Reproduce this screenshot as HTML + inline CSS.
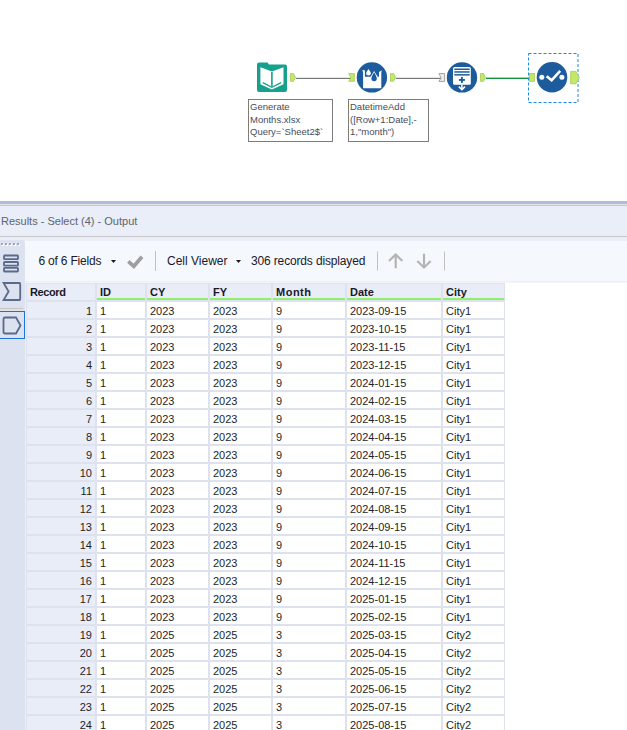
<!DOCTYPE html>
<html><head><meta charset="utf-8">
<style>
*{margin:0;padding:0;box-sizing:border-box}
html,body{width:627px;height:730px;overflow:hidden;background:#fff;position:relative;font-family:"Liberation Sans",sans-serif}
.a{position:absolute}
.hc{position:absolute;top:284px;height:16px;background:#e9edf8;font-weight:bold;font-size:11px;color:#1a1a2a;line-height:14px;padding-top:1px;padding-left:3px;white-space:nowrap}
.gr{position:absolute;top:298px;height:2px;background:#8ef06c}
.rc,.dc{position:absolute;height:16px;font-size:11px;line-height:18px;color:#1e1e28;white-space:nowrap}
.rc{background:#e9edf8;text-align:right;padding-right:3px}
.dc{background:#fff;padding-left:3px}
.tb{position:absolute;font-size:12px;color:#1a1a2a;white-space:nowrap;line-height:14px}
.ann{position:absolute;border:1px solid #7c7c7c;background:#fff;font-size:9.5px;line-height:12.3px;color:#464d5c;padding:1.4px 0 0 1px;white-space:nowrap}
</style></head><body>
<!-- canvas -->
<svg class="a" style="left:0;top:0" width="627" height="200" viewBox="0 0 627 200">
  <!-- connections -->
  <rect x="296" y="77" width="55" height="1" fill="#e4e4e4"/><rect x="296" y="78" width="55" height="1" fill="#7a7a7a"/>
  <rect x="396" y="77" width="45" height="1" fill="#e4e4e4"/><rect x="396" y="78" width="45" height="1" fill="#7a7a7a"/>
  <rect x="486" y="77" width="45" height="1" fill="#a6d4ae"/><rect x="486" y="78" width="45" height="1" fill="#14923e"/>
  <!-- node1 input folder -->
  <path d="M257 64.5 Q257 62.4 259 62.4 L267.5 62.4 L269 64.4 L285 64.4 Q287 64.4 287 66.4 L287 90 Q287 92 285 92 L259 92 Q257 92 257 90 Z" fill="#17a08e"/>
  <path d="M260.4 67.2 L271.9 71.6 L283.5 67.2 L283.5 84.3 L271.9 89.5 L260.4 84.3 Z" fill="#fff"/>
  <line x1="271.9" y1="72" x2="271.9" y2="86.5" stroke="#17a08e" stroke-width="1.6"/>
  <polyline points="262.8,82.7 271.9,87.3 281.1,82.7" fill="none" stroke="#17a08e" stroke-width="1.4"/>
  <path d="M290.4 73.6 L293.5 73.6 L295.5 77.5 L293.5 81.3 L290.4 81.3 Z" fill="#c2e86a" stroke="#a9cf5c" stroke-width="0.9" stroke-linejoin="round"/>
  <!-- node2 formula -->
  <path d="M348.7 73.6 L354.3 73.6 L354.3 81.3 L348.7 81.3 L350.9 78 Z" fill="#c2e86a" stroke="#a9cf5c" stroke-width="0.9" stroke-linejoin="round"/>
  <circle cx="371.9" cy="77.4" r="15.2" fill="#1d5c9c"/>
  <path d="M362.1 70.2 L364.9 70.2 L364.9 76.8 L370.6 76.8 L374.1 70.9 L377.7 76.8 L379 76.8 L379 71.9 L381.8 70.2 L381.3 71.9 L381.3 88.3 L363.1 88.3 L363.1 71.9 Z" fill="#fff"/>
  <path d="M374.1 72.2 Q376.8 76.5 376.8 78.6 A2.7 2.7 0 0 1 371.4 78.6 Q371.4 76.5 374.1 72.2 Z" fill="#1d5c9c"/>
  <path d="M368.5 69.1 Q370.8 72.3 370.8 73.3 A2.3 2.3 0 0 1 366.2 73.3 Q366.2 72.3 368.5 69.1 Z" fill="#fff"/>
  <path d="M390.5 73.6 L393.6 73.6 L395.6 77.5 L393.6 81.3 L390.5 81.3 Z" fill="#c2e86a" stroke="#a9cf5c" stroke-width="0.9" stroke-linejoin="round"/>
  <!-- node3 append -->
  <path d="M438.9 73.6 L444.6 73.6 L444.6 81.4 L438.9 81.4 L441.2 78 Z" fill="#ececec" stroke="#9a9a9a" stroke-width="0.9"/>
  <circle cx="462" cy="77.4" r="15.2" fill="#1d5c9c"/>
  <rect x="453" y="66.9" width="17.8" height="17.9" rx="1.5" fill="#fff"/>
  <rect x="454.3" y="68.5" width="15.4" height="1.5" fill="#1d5c9c"/>
  <rect x="454.3" y="71.2" width="15.4" height="1.5" fill="#1d5c9c"/>
  <rect x="454.3" y="74.1" width="15.4" height="1.5" fill="#1d5c9c"/>
  <rect x="458.9" y="79" width="6" height="1.9" fill="#1d5c9c"/>
  <rect x="460.95" y="76.9" width="1.9" height="6" fill="#1d5c9c"/>
  <line x1="461.9" y1="84.5" x2="461.9" y2="89.2" stroke="#fff" stroke-width="1.5"/>
  <polyline points="458.8,86.6 461.9,89.6 465,86.6" fill="none" stroke="#fff" stroke-width="1.5"/>
  <path d="M480.4 73.6 L483.5 73.6 L485.5 77.5 L483.5 81.3 L480.4 81.3 Z" fill="#c2e86a" stroke="#a9cf5c" stroke-width="0.9" stroke-linejoin="round"/>
  <!-- node4 select -->
  <rect x="528.5" y="53.5" width="49.5" height="49" fill="none" stroke="#1e88e5" stroke-width="1" stroke-dasharray="3 2"/>
  <rect x="529.4" y="73.5" width="5" height="7.8" fill="#c2e86a" stroke="#a9cf5c" stroke-width="0.9"/>
  <circle cx="552" cy="77.3" r="15.3" fill="#1d5c9c"/>
  <circle cx="541.8" cy="77.3" r="2.5" fill="#fff"/>
  <circle cx="561.9" cy="77.3" r="2.5" fill="#fff"/>
  <polyline points="546.6,76.3 551.6,80.3 560.2,70.8" fill="none" stroke="#fff" stroke-width="2.6"/>
  <path d="M570.7 71.4 L576 71.4 L579.3 77.6 L576 83.8 L570.7 83.8 Z" fill="#c2e86a" stroke="#a9cf5c" stroke-width="0.9" stroke-linejoin="round"/>
</svg>
<div class="ann" style="left:248px;top:99px;width:85px;height:43px">Generate<br>Months.xlsx<br>Query=`Sheet2$`</div>
<div class="ann" style="left:348px;top:99px;width:81px;height:43px">DatetimeAdd<br>([Row+1:Date],-<br>1,"month")</div>

<!-- results band -->
<div class="a" style="left:0;top:201px;width:627px;height:3px;background:#adbde0"></div>
<div class="a" style="left:0;top:204px;width:627px;height:1px;background:#e4e4e4"></div>
<div class="a" style="left:0;top:205px;width:627px;height:1px;background:#c6c6c6"></div>
<div class="a" style="left:0;top:206px;width:627px;height:35px;background:#eaeef8"></div>
<div class="a" style="left:0;top:236px;width:627px;height:1px;background:#c8c8c8"></div>
<div class="a" style="left:1px;top:214px;font-size:11px;line-height:14px;color:#62626e;white-space:nowrap">Results - Select (4) - Output</div>
<!-- sidebar -->
<div class="a" style="left:0;top:240px;width:25px;height:490px;background:#dce2ef;border-top-right-radius:3px"></div>
<div class="a" style="left:25px;top:242px;width:1px;height:488px;background:#f0f0f0"></div>
<!-- toolbar -->
<div class="a" style="left:25px;top:241px;width:602px;height:40px;background:#f5f8fd;border-top-left-radius:3px"></div>
<div class="a" style="left:26px;top:281px;width:601px;height:1px;background:#efefeb"></div>
<div class="a" style="left:26px;top:282px;width:601px;height:1px;background:#f5f7fc"></div>
<div class="a" style="left:26px;top:283px;width:601px;height:447px;background:#fff"></div>
<div class="tb" style="left:38.5px;top:254px;letter-spacing:-0.2px">6 of 6 Fields</div>
<div class="tb" style="left:167px;top:254px">Cell Viewer</div>
<div class="tb" style="left:251px;top:254px;letter-spacing:-0.15px">306 records displayed</div>
<svg class="a" style="left:0;top:236px" width="627" height="110" viewBox="0 236 627 110">
  <g fill="#a8a8a8">
   <rect x="2" y="244" width="2" height="2" fill="#fff"/><rect x="6" y="244" width="2" height="2" fill="#fff"/><rect x="10" y="244" width="2" height="2" fill="#fff"/><rect x="14" y="244" width="2" height="2" fill="#fff"/><rect x="18" y="244" width="2" height="2" fill="#fff"/>
   <rect x="1" y="243" width="2" height="2"/><rect x="5" y="243" width="2" height="2"/><rect x="9" y="243" width="2" height="2"/><rect x="13" y="243" width="2" height="2"/><rect x="17" y="243" width="2" height="2"/>
  </g>
  <path d="M111 260 L116 260 L113.5 263 Z" fill="#1a1a1a"/>
  <path d="M236 260 L241 260 L238.5 263 Z" fill="#1a1a1a"/>
  <polyline points="128.3,261.3 133.8,266.3 142,256.8" fill="none" stroke="#9e9e9e" stroke-width="3.7"/>
  <rect x="155" y="251" width="1" height="20" fill="#c0c0c0"/>
  <rect x="377" y="251.5" width="1" height="19" fill="#c0c0c0"/>
  <rect x="444" y="251.5" width="1" height="19" fill="#c0c0c0"/>
  <g fill="none" stroke="#b4b4b4" stroke-width="2.2">
    <line x1="395.7" y1="254.5" x2="395.7" y2="268.3"/>
    <polyline points="389,261 395.7,254.5 402.4,261"/>
    <line x1="424" y1="253.7" x2="424" y2="267.5"/>
    <polyline points="417.3,261 424,267.5 430.7,261"/>
  </g>
  <g fill="none" stroke="#5b6a8c" stroke-width="1.8">
    <rect x="4" y="255.5" width="14" height="3.6" rx="0.7"/>
    <rect x="4" y="262" width="14" height="3.6" rx="0.7"/>
    <rect x="4" y="267.9" width="14" height="3.6" rx="0.7"/>
    <path d="M3.6 283 L19.5 283 Q20.2 283 20.2 284 L20.2 299 Q20.2 300 19.5 300 L3.6 300 L8.6 291.5 Z" stroke-linejoin="miter"/>
    <path d="M5 317.5 L16 317.5 L20.5 325.5 L16 333.5 L5 333.5 Q3.5 333.5 3.5 332 L3.5 319 Q3.5 317.5 5 317.5 Z"/>
  </g>
  <rect x="0" y="308" width="23" height="1" fill="#c8c4bc"/>
  <rect x="-0.5" y="311.5" width="25" height="27" fill="none" stroke="#1a72da" stroke-width="1"/>
</svg>
<!-- table -->
<div class="a" style="left:26px;top:283px;width:479px;height:447px;background:#dde2ee"></div>
<div class="hc" style="left:27px;width:68px;letter-spacing:-0.4px"><span>Record</span></div>
<div class="hc" style="left:97px;width:48px;letter-spacing:0"><span>ID</span></div>
<div class="gr" style="left:97px;width:48px"></div>
<div class="hc" style="left:147px;width:61px;letter-spacing:0"><span>CY</span></div>
<div class="gr" style="left:147px;width:61px"></div>
<div class="hc" style="left:210px;width:61px;letter-spacing:0"><span>FY</span></div>
<div class="gr" style="left:210px;width:61px"></div>
<div class="hc" style="left:273px;width:72px;letter-spacing:0.5px"><span>Month</span></div>
<div class="gr" style="left:273px;width:72px"></div>
<div class="hc" style="left:347px;width:94px;letter-spacing:0"><span>Date</span></div>
<div class="gr" style="left:347px;width:94px"></div>
<div class="hc" style="left:443px;width:61px;letter-spacing:0"><span>City</span></div>
<div class="gr" style="left:443px;width:61px"></div>
<div class="rc" style="left:27px;top:302px;width:68px">1</div>
<div class="dc" style="left:97px;top:302px;width:48px">1</div>
<div class="dc" style="left:147px;top:302px;width:61px">2023</div>
<div class="dc" style="left:210px;top:302px;width:61px">2023</div>
<div class="dc" style="left:273px;top:302px;width:72px">9</div>
<div class="dc" style="left:347px;top:302px;width:94px">2023-09-15</div>
<div class="dc" style="left:443px;top:302px;width:61px">City1</div>
<div class="rc" style="left:27px;top:320px;width:68px">2</div>
<div class="dc" style="left:97px;top:320px;width:48px">1</div>
<div class="dc" style="left:147px;top:320px;width:61px">2023</div>
<div class="dc" style="left:210px;top:320px;width:61px">2023</div>
<div class="dc" style="left:273px;top:320px;width:72px">9</div>
<div class="dc" style="left:347px;top:320px;width:94px">2023-10-15</div>
<div class="dc" style="left:443px;top:320px;width:61px">City1</div>
<div class="rc" style="left:27px;top:338px;width:68px">3</div>
<div class="dc" style="left:97px;top:338px;width:48px">1</div>
<div class="dc" style="left:147px;top:338px;width:61px">2023</div>
<div class="dc" style="left:210px;top:338px;width:61px">2023</div>
<div class="dc" style="left:273px;top:338px;width:72px">9</div>
<div class="dc" style="left:347px;top:338px;width:94px">2023-11-15</div>
<div class="dc" style="left:443px;top:338px;width:61px">City1</div>
<div class="rc" style="left:27px;top:356px;width:68px">4</div>
<div class="dc" style="left:97px;top:356px;width:48px">1</div>
<div class="dc" style="left:147px;top:356px;width:61px">2023</div>
<div class="dc" style="left:210px;top:356px;width:61px">2023</div>
<div class="dc" style="left:273px;top:356px;width:72px">9</div>
<div class="dc" style="left:347px;top:356px;width:94px">2023-12-15</div>
<div class="dc" style="left:443px;top:356px;width:61px">City1</div>
<div class="rc" style="left:27px;top:374px;width:68px">5</div>
<div class="dc" style="left:97px;top:374px;width:48px">1</div>
<div class="dc" style="left:147px;top:374px;width:61px">2023</div>
<div class="dc" style="left:210px;top:374px;width:61px">2023</div>
<div class="dc" style="left:273px;top:374px;width:72px">9</div>
<div class="dc" style="left:347px;top:374px;width:94px">2024-01-15</div>
<div class="dc" style="left:443px;top:374px;width:61px">City1</div>
<div class="rc" style="left:27px;top:392px;width:68px">6</div>
<div class="dc" style="left:97px;top:392px;width:48px">1</div>
<div class="dc" style="left:147px;top:392px;width:61px">2023</div>
<div class="dc" style="left:210px;top:392px;width:61px">2023</div>
<div class="dc" style="left:273px;top:392px;width:72px">9</div>
<div class="dc" style="left:347px;top:392px;width:94px">2024-02-15</div>
<div class="dc" style="left:443px;top:392px;width:61px">City1</div>
<div class="rc" style="left:27px;top:410px;width:68px">7</div>
<div class="dc" style="left:97px;top:410px;width:48px">1</div>
<div class="dc" style="left:147px;top:410px;width:61px">2023</div>
<div class="dc" style="left:210px;top:410px;width:61px">2023</div>
<div class="dc" style="left:273px;top:410px;width:72px">9</div>
<div class="dc" style="left:347px;top:410px;width:94px">2024-03-15</div>
<div class="dc" style="left:443px;top:410px;width:61px">City1</div>
<div class="rc" style="left:27px;top:428px;width:68px">8</div>
<div class="dc" style="left:97px;top:428px;width:48px">1</div>
<div class="dc" style="left:147px;top:428px;width:61px">2023</div>
<div class="dc" style="left:210px;top:428px;width:61px">2023</div>
<div class="dc" style="left:273px;top:428px;width:72px">9</div>
<div class="dc" style="left:347px;top:428px;width:94px">2024-04-15</div>
<div class="dc" style="left:443px;top:428px;width:61px">City1</div>
<div class="rc" style="left:27px;top:446px;width:68px">9</div>
<div class="dc" style="left:97px;top:446px;width:48px">1</div>
<div class="dc" style="left:147px;top:446px;width:61px">2023</div>
<div class="dc" style="left:210px;top:446px;width:61px">2023</div>
<div class="dc" style="left:273px;top:446px;width:72px">9</div>
<div class="dc" style="left:347px;top:446px;width:94px">2024-05-15</div>
<div class="dc" style="left:443px;top:446px;width:61px">City1</div>
<div class="rc" style="left:27px;top:464px;width:68px">10</div>
<div class="dc" style="left:97px;top:464px;width:48px">1</div>
<div class="dc" style="left:147px;top:464px;width:61px">2023</div>
<div class="dc" style="left:210px;top:464px;width:61px">2023</div>
<div class="dc" style="left:273px;top:464px;width:72px">9</div>
<div class="dc" style="left:347px;top:464px;width:94px">2024-06-15</div>
<div class="dc" style="left:443px;top:464px;width:61px">City1</div>
<div class="rc" style="left:27px;top:482px;width:68px">11</div>
<div class="dc" style="left:97px;top:482px;width:48px">1</div>
<div class="dc" style="left:147px;top:482px;width:61px">2023</div>
<div class="dc" style="left:210px;top:482px;width:61px">2023</div>
<div class="dc" style="left:273px;top:482px;width:72px">9</div>
<div class="dc" style="left:347px;top:482px;width:94px">2024-07-15</div>
<div class="dc" style="left:443px;top:482px;width:61px">City1</div>
<div class="rc" style="left:27px;top:500px;width:68px">12</div>
<div class="dc" style="left:97px;top:500px;width:48px">1</div>
<div class="dc" style="left:147px;top:500px;width:61px">2023</div>
<div class="dc" style="left:210px;top:500px;width:61px">2023</div>
<div class="dc" style="left:273px;top:500px;width:72px">9</div>
<div class="dc" style="left:347px;top:500px;width:94px">2024-08-15</div>
<div class="dc" style="left:443px;top:500px;width:61px">City1</div>
<div class="rc" style="left:27px;top:518px;width:68px">13</div>
<div class="dc" style="left:97px;top:518px;width:48px">1</div>
<div class="dc" style="left:147px;top:518px;width:61px">2023</div>
<div class="dc" style="left:210px;top:518px;width:61px">2023</div>
<div class="dc" style="left:273px;top:518px;width:72px">9</div>
<div class="dc" style="left:347px;top:518px;width:94px">2024-09-15</div>
<div class="dc" style="left:443px;top:518px;width:61px">City1</div>
<div class="rc" style="left:27px;top:536px;width:68px">14</div>
<div class="dc" style="left:97px;top:536px;width:48px">1</div>
<div class="dc" style="left:147px;top:536px;width:61px">2023</div>
<div class="dc" style="left:210px;top:536px;width:61px">2023</div>
<div class="dc" style="left:273px;top:536px;width:72px">9</div>
<div class="dc" style="left:347px;top:536px;width:94px">2024-10-15</div>
<div class="dc" style="left:443px;top:536px;width:61px">City1</div>
<div class="rc" style="left:27px;top:554px;width:68px">15</div>
<div class="dc" style="left:97px;top:554px;width:48px">1</div>
<div class="dc" style="left:147px;top:554px;width:61px">2023</div>
<div class="dc" style="left:210px;top:554px;width:61px">2023</div>
<div class="dc" style="left:273px;top:554px;width:72px">9</div>
<div class="dc" style="left:347px;top:554px;width:94px">2024-11-15</div>
<div class="dc" style="left:443px;top:554px;width:61px">City1</div>
<div class="rc" style="left:27px;top:572px;width:68px">16</div>
<div class="dc" style="left:97px;top:572px;width:48px">1</div>
<div class="dc" style="left:147px;top:572px;width:61px">2023</div>
<div class="dc" style="left:210px;top:572px;width:61px">2023</div>
<div class="dc" style="left:273px;top:572px;width:72px">9</div>
<div class="dc" style="left:347px;top:572px;width:94px">2024-12-15</div>
<div class="dc" style="left:443px;top:572px;width:61px">City1</div>
<div class="rc" style="left:27px;top:590px;width:68px">17</div>
<div class="dc" style="left:97px;top:590px;width:48px">1</div>
<div class="dc" style="left:147px;top:590px;width:61px">2023</div>
<div class="dc" style="left:210px;top:590px;width:61px">2023</div>
<div class="dc" style="left:273px;top:590px;width:72px">9</div>
<div class="dc" style="left:347px;top:590px;width:94px">2025-01-15</div>
<div class="dc" style="left:443px;top:590px;width:61px">City1</div>
<div class="rc" style="left:27px;top:608px;width:68px">18</div>
<div class="dc" style="left:97px;top:608px;width:48px">1</div>
<div class="dc" style="left:147px;top:608px;width:61px">2023</div>
<div class="dc" style="left:210px;top:608px;width:61px">2023</div>
<div class="dc" style="left:273px;top:608px;width:72px">9</div>
<div class="dc" style="left:347px;top:608px;width:94px">2025-02-15</div>
<div class="dc" style="left:443px;top:608px;width:61px">City1</div>
<div class="rc" style="left:27px;top:626px;width:68px">19</div>
<div class="dc" style="left:97px;top:626px;width:48px">1</div>
<div class="dc" style="left:147px;top:626px;width:61px">2025</div>
<div class="dc" style="left:210px;top:626px;width:61px">2025</div>
<div class="dc" style="left:273px;top:626px;width:72px">3</div>
<div class="dc" style="left:347px;top:626px;width:94px">2025-03-15</div>
<div class="dc" style="left:443px;top:626px;width:61px">City2</div>
<div class="rc" style="left:27px;top:644px;width:68px">20</div>
<div class="dc" style="left:97px;top:644px;width:48px">1</div>
<div class="dc" style="left:147px;top:644px;width:61px">2025</div>
<div class="dc" style="left:210px;top:644px;width:61px">2025</div>
<div class="dc" style="left:273px;top:644px;width:72px">3</div>
<div class="dc" style="left:347px;top:644px;width:94px">2025-04-15</div>
<div class="dc" style="left:443px;top:644px;width:61px">City2</div>
<div class="rc" style="left:27px;top:662px;width:68px">21</div>
<div class="dc" style="left:97px;top:662px;width:48px">1</div>
<div class="dc" style="left:147px;top:662px;width:61px">2025</div>
<div class="dc" style="left:210px;top:662px;width:61px">2025</div>
<div class="dc" style="left:273px;top:662px;width:72px">3</div>
<div class="dc" style="left:347px;top:662px;width:94px">2025-05-15</div>
<div class="dc" style="left:443px;top:662px;width:61px">City2</div>
<div class="rc" style="left:27px;top:680px;width:68px">22</div>
<div class="dc" style="left:97px;top:680px;width:48px">1</div>
<div class="dc" style="left:147px;top:680px;width:61px">2025</div>
<div class="dc" style="left:210px;top:680px;width:61px">2025</div>
<div class="dc" style="left:273px;top:680px;width:72px">3</div>
<div class="dc" style="left:347px;top:680px;width:94px">2025-06-15</div>
<div class="dc" style="left:443px;top:680px;width:61px">City2</div>
<div class="rc" style="left:27px;top:698px;width:68px">23</div>
<div class="dc" style="left:97px;top:698px;width:48px">1</div>
<div class="dc" style="left:147px;top:698px;width:61px">2025</div>
<div class="dc" style="left:210px;top:698px;width:61px">2025</div>
<div class="dc" style="left:273px;top:698px;width:72px">3</div>
<div class="dc" style="left:347px;top:698px;width:94px">2025-07-15</div>
<div class="dc" style="left:443px;top:698px;width:61px">City2</div>
<div class="rc" style="left:27px;top:716px;width:68px">24</div>
<div class="dc" style="left:97px;top:716px;width:48px">1</div>
<div class="dc" style="left:147px;top:716px;width:61px">2025</div>
<div class="dc" style="left:210px;top:716px;width:61px">2025</div>
<div class="dc" style="left:273px;top:716px;width:72px">3</div>
<div class="dc" style="left:347px;top:716px;width:94px">2025-08-15</div>
<div class="dc" style="left:443px;top:716px;width:61px">City2</div>
</body></html>
